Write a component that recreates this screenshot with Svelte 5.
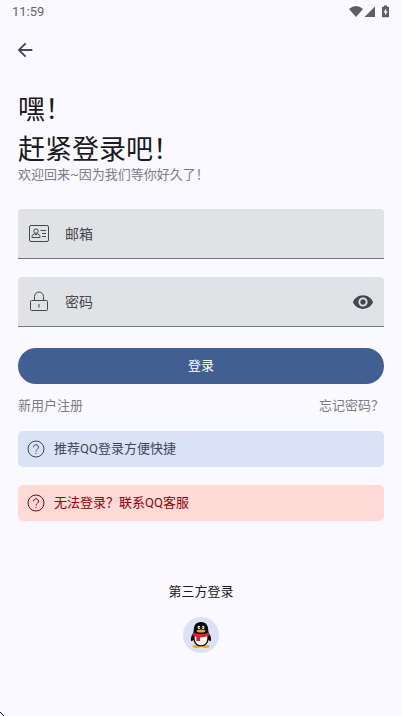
<script lang="ts">
  let email = "";
  let password = "";
  let showPassword = false;

  const notices = [
    { text: "推荐QQ登录方便快捷", kind: "info" },
    { text: "无法登录？联系QQ客服", kind: "error" },
  ];

  function togglePassword() {
    showPassword = !showPassword;
  }
</script>

<div class="page">
  <header class="status-bar">
    <span>11:59</span>
    <svg class="status-icons" width="42" height="14" viewBox="0 0 42 14" aria-hidden="true">
      <path d="M1 4Q8-2 15 4L8 12Z" />
      <path d="M27 1.5V12H16.5Z" />
      <path d="M36 .5h3v1.3h2v10.5h-7V1.8h2z" />
      <path class="bolt" d="M38.3 3.2L35.5 7.6h1.7v3L39.7 6.4h-1.6z" />
    </svg>
  </header>

  <nav class="app-bar">
    <button class="icon-btn" type="button" aria-label="返回">
      <svg width="22" height="22" viewBox="0 0 24 24" aria-hidden="true">
        <path d="M20 11H7.83l5.59-5.59L12 4l-8 8 8 8 1.41-1.41L7.83 13H20z" />
      </svg>
    </button>
  </nav>

  <main>
    <h1>嘿！<br />赶紧登录吧！</h1>
    <p class="subtitle">欢迎回来~因为我们等你好久了！</p>

    <form on:submit|preventDefault>
      <label class="field">
        <svg class="line-icon" width="22" height="22" viewBox="0 0 22 22" aria-hidden="true">
          <rect x="1.5" y="2.5" width="19" height="16" rx="1.5" />
          <circle cx="8" cy="8.1" r="2.2" />
          <path d="M4 14.5v-1.2q0-1.8 2.8-2.6L8 12.1l1.2-1.4q2.8.8 2.8 2.6v1.2zM12.5 7.5H18M14 10.5h4M14 13.5h4" />
        </svg>
        <input type="email" placeholder="邮箱" aria-label="邮箱" bind:value={email} />
      </label>

      <label class="field">
        <svg class="line-icon" width="22" height="22" viewBox="0 0 22 22" aria-hidden="true">
          <rect x="2.5" y="9.5" width="17" height="10" rx="1" />
          <path d="M6.5 9.5V5.5a4.5 4.5 0 0 1 9 0v4M11 13v3.5" />
        </svg>
        <input
          type={showPassword ? "text" : "password"}
          placeholder="密码"
          aria-label="密码"
          value={password}
          on:input={(e) => (password = e.currentTarget.value)}
        />
        <button class="icon-btn" type="button" aria-label="显示密码" on:click={togglePassword}>
          <svg width="22" height="22" viewBox="0 0 24 24" aria-hidden="true">
            <path
              d="M12 4.5C7 4.5 2.73 7.61 1 12c1.73 4.39 6 7.5 11 7.5s9.27-3.11 11-7.5c-1.73-4.39-6-7.5-11-7.5zM12 17c-2.76 0-5-2.24-5-5s2.24-5 5-5 5 2.24 5 5-2.24 5-5 5zm0-8c-1.66 0-3 1.34-3 3s1.34 3 3 3 3-1.34 3-3-1.34-3-3-3z"
            />
          </svg>
        </button>
      </label>

      <button class="login-btn" type="submit">登录</button>
    </form>

    <div class="links">
      <a href="#register">新用户注册</a>
      <a href="#forgot">忘记密码？</a>
    </div>

    {#each notices as notice}
      <button class={`notice ${notice.kind}`} type="button">
        <svg width="18" height="18" viewBox="0 0 18 18" aria-hidden="true">
          <circle cx="9" cy="9" r="8" />
          <path d="M6.5 7.3a2.5 2.5 0 1 1 3.9 2q-1.4.9-1.4 2.3M9 13v1" />
        </svg>
        <span>{notice.text}</span>
      </button>
    {/each}

    <section class="third-party">
      <h2>第三方登录</h2>
      <button class="qq-btn" type="button" aria-label="QQ登录">
        <svg width="36" height="36" viewBox="0 0 36 36" aria-hidden="true">
          <ellipse cx="13.5" cy="29.3" rx="4" ry="1.6" fill="#f5a623" />
          <ellipse cx="22.5" cy="29.3" rx="4" ry="1.6" fill="#f5a623" />
          <path
            fill="#080808"
            d="M18 5c-5 0-7.2 3.6-7.2 7.8 0 1.5-.4 2.6-1 4C8.4 18.8 7.5 21.5 8.1 23.8c.3 1 1.5.2 2.3-1.2C11 27 14 29.5 18 29.5s7-2.5 7.6-6.9c.8 1.4 2 2.2 2.3 1.2.6-2.3-.3-5-1.7-7-.6-1.4-1-2.5-1-4C25.2 8.6 23 5 18 5z"
          />
          <path fill="#fff" d="M11.8 18h12.4c.8 6-1.4 10.3-6.2 10.3S11 24 11.8 18z" />
          <ellipse cx="15.9" cy="10.5" rx="1.3" ry="1.8" fill="#fff" />
          <ellipse cx="20.1" cy="10.5" rx="1.3" ry="1.8" fill="#fff" />
          <circle cx="16.2" cy="10.6" r=".7" fill="#080808" />
          <circle cx="19.8" cy="10.6" r=".7" fill="#080808" />
          <ellipse cx="18" cy="14" rx="4.3" ry="1.5" fill="#f5a623" />
          <path
            fill="#e3202b"
            d="M10.5 15.5Q18 18.5 25.5 15.5l1 3Q21.5 20.5 17 20.4V24h-3.7l.2-4.1q-2.3-.5-4-1.4z"
          />
        </svg>
      </button>
    </section>
  </main>

  <svg class="corner-mark" width="4" height="4" viewBox="0 0 4 4" aria-hidden="true">
    <path d="M0 0h1v1h1v1h1v1h1v1H3V3H2V2H1V1H0z" />
  </svg>
</div>

<style>
  :global(body) {
    background-color: #faf9ff;
  }

  .page {
    position: relative;
    box-sizing: border-box;
    min-height: 100vh;
    color: #1a1b20;
    font-family: Roboto, "Noto Sans CJK SC", sans-serif;
    font-size: 13px;
    line-height: 18px;
  }

  .page * {
    box-sizing: border-box;
  }

  button,
  input {
    margin: 0;
    padding: 0;
    border: none;
    background: none;
    color: inherit;
    font: inherit;
  }

  button {
    cursor: pointer;
  }

  svg {
    display: block;
    flex: none;
  }

  .status-bar {
    display: flex;
    align-items: center;
    justify-content: space-between;
    height: 24px;
    padding: 0 12px;
    color: #66666a;
  }

  .status-icons {
    fill: #5f5f63;
  }

  .status-icons .bolt {
    fill: #fff;
  }

  .app-bar {
    display: flex;
    align-items: center;
    height: 52px;
    padding: 0 14px;
  }

  .icon-btn {
    fill: #44474e;
  }

  main {
    padding: 14px 18px 0;
  }

  h1 {
    margin: 0;
    font-size: 27px;
    font-weight: 400;
    line-height: 40px;
  }

  .subtitle {
    margin: -2px 0 27px;
    color: #7c7d84;
    line-height: 14px;
  }

  .field {
    display: flex;
    align-items: center;
    gap: 15px;
    height: 50px;
    margin-bottom: 18px;
    padding: 0 10px;
    border-bottom: 1px solid #74777f;
    border-radius: 4px 4px 0 0;
    background-color: #e1e2e6;
    color: #44474e;
    font-size: 14px;
  }

  .field input {
    flex: 1;
    min-width: 0;
    outline: none;
  }

  .field input::placeholder {
    color: #44474e;
    opacity: 1;
  }

  .line-icon {
    fill: none;
    stroke: #44474e;
    stroke-width: 1;
  }

  .login-btn {
    display: block;
    width: 100%;
    height: 36px;
    margin-top: 21px;
    border-radius: 18px;
    background-color: #425f91;
    color: #fff;
  }

  .links {
    display: flex;
    justify-content: space-between;
    padding: 13px 0 16px;
  }

  .links a {
    color: #7c7d84;
    text-decoration: none;
  }

  .notice {
    display: flex;
    align-items: center;
    gap: 9px;
    width: 100%;
    height: 36px;
    margin-bottom: 18px;
    padding: 0 9px;
    border-radius: 5px;
  }

  .notice svg {
    fill: none;
    stroke: currentColor;
    stroke-width: 1;
  }

  .info {
    background-color: #d9e2f7;
    color: #3e4759;
  }

  .error {
    background-color: #ffdad6;
    color: #93000a;
  }

  .third-party {
    display: flex;
    flex-direction: column;
    align-items: center;
    gap: 16px;
    padding-top: 44px;
  }

  h2 {
    margin: 0;
    font-size: 13px;
    font-weight: 400;
  }

  .qq-btn {
    border-radius: 50%;
    background-color: #d9e2f7;
  }

  .corner-mark {
    position: absolute;
    bottom: 0;
    left: 0;
  }
</style>
